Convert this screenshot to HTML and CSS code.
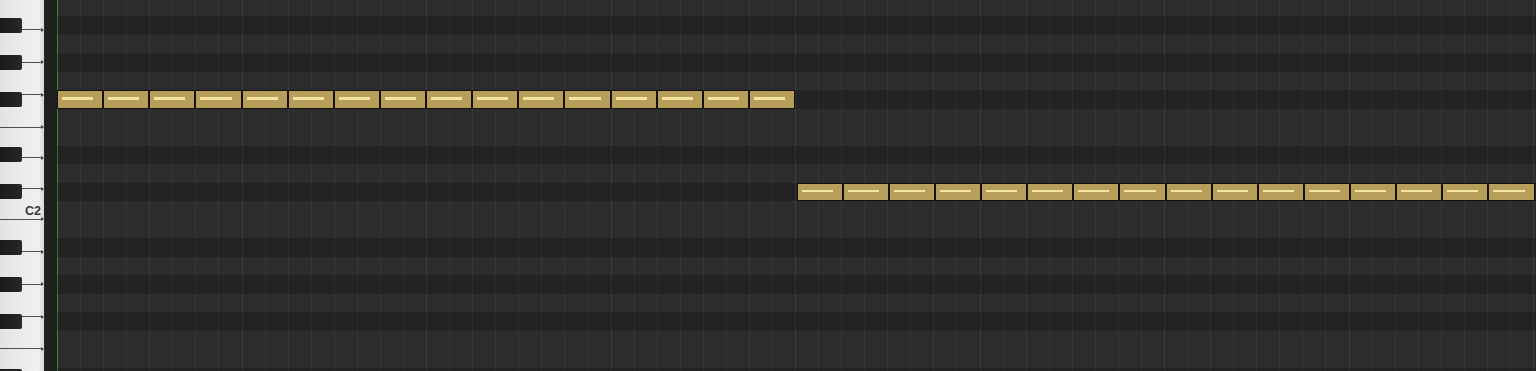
FILE: index.html
```html
<!DOCTYPE html>
<html>
<head>
<meta charset="utf-8">
<link rel="stylesheet" href="styles.css">
</head>
<body>
<div class="roll">
  <div class="keyboard">
    <div class="whites">
      <div class="wk wide"></div>
      <div class="wk wide"></div>
      <div class="wk wide"></div>
      <div class="wk wide"></div>
      <div class="wk narrow"></div>
      <div class="wk narrow"></div>
      <div class="wk narrow"><span class="label">C2</span></div>
      <div class="wk wide"></div>
      <div class="wk wide"></div>
      <div class="wk wide"></div>
      <div class="wk wide"></div>
      <div class="wk narrow"></div>
    </div>
    <div class="bk" style="top:17.5px"></div>
    <div class="bk" style="top:54.5px"></div>
    <div class="bk" style="top:91.5px"></div>
    <div class="bk" style="top:147px"></div>
    <div class="bk" style="top:184px"></div>
    <div class="bk" style="top:239.5px"></div>
    <div class="bk" style="top:276.5px"></div>
    <div class="bk" style="top:313.5px"></div>
    <div class="bk" style="top:369px"></div>
  </div>
  <div class="gutter"></div>
  <div class="grid">
    <div class="cols" id="cols"></div>
    <div class="rows">
      <div class="row"></div>
      <div class="row dark"></div>
      <div class="row"></div>
      <div class="row dark"></div>
      <div class="row"></div>
      <div class="row dark">
        <div class="notes">
          <div class="note"><span></span></div><div class="note"><span></span></div><div class="note"><span></span></div><div class="note"><span></span></div>
          <div class="note"><span></span></div><div class="note"><span></span></div><div class="note"><span></span></div><div class="note"><span></span></div>
          <div class="note"><span></span></div><div class="note"><span></span></div><div class="note"><span></span></div><div class="note"><span></span></div>
          <div class="note"><span></span></div><div class="note"><span></span></div><div class="note"><span></span></div><div class="note"><span></span></div>
        </div>
      </div>
      <div class="row"></div>
      <div class="row"></div>
      <div class="row dark"></div>
      <div class="row"></div>
      <div class="row dark">
        <div class="notes second">
          <div class="note"><span></span></div><div class="note"><span></span></div><div class="note"><span></span></div><div class="note"><span></span></div>
          <div class="note"><span></span></div><div class="note"><span></span></div><div class="note"><span></span></div><div class="note"><span></span></div>
          <div class="note"><span></span></div><div class="note"><span></span></div><div class="note"><span></span></div><div class="note"><span></span></div>
          <div class="note"><span></span></div><div class="note"><span></span></div><div class="note"><span></span></div><div class="note"><span></span></div>
        </div>
      </div>
      <div class="row"></div>
      <div class="row"></div>
      <div class="row dark"></div>
      <div class="row"></div>
      <div class="row dark"></div>
      <div class="row"></div>
      <div class="row dark"></div>
      <div class="row"></div>
      <div class="row"></div>
      <div class="row dark"></div>
    </div>
  </div>
</div>
<script src="script.js"></script>
</body>
</html>
```

FILE: styles.css
```css
* { box-sizing: border-box; }
html, body {
  margin: 0;
  padding: 0;
  width: 1536px;
  height: 371px;
  overflow: hidden;
  background: #1e1e1e;
  font-family: "Liberation Sans", Arial, sans-serif;
}
.roll {
  display: flex;
  height: 371px;
  overflow: hidden;
}
.keyboard {
  position: relative;
  width: 45px;
  flex: none;
  border-right: 1px solid #262626;
  background: linear-gradient(to right, #e3e3e3 0%, #ebebeb 50%, #f0f0f0 88%, #d4d4d4 100%);
  overflow: hidden;
}
.whites {
  display: flex;
  flex-direction: column;
  margin-top: -2.5px;
}
.wk {
  position: relative;
  flex: none;
  display: flex;
  align-items: flex-end;
  justify-content: flex-end;
}
.wk.wide { height: 32.375px; }
.wk.narrow { height: 30.833px; }
.wk::after {
  content: "";
  position: absolute;
  left: 0;
  right: 1px;
  bottom: -0.5px;
  height: 1px;
  background: #4e4e4e;
}
.wk::before {
  content: "";
  position: absolute;
  right: 0;
  bottom: -2px;
  width: 0;
  height: 0;
  border-top: 2px solid transparent;
  border-bottom: 2px solid transparent;
  border-left: 3px solid #3a3a3a;
}
.label {
  font-size: 12.5px;
  font-weight: bold;
  color: #383838;
  line-height: 1;
  padding: 0 3px 2px 0;
}
.bk {
  position: absolute;
  left: 0;
  width: 21.5px;
  height: 15px;
  background: linear-gradient(to right, #1b1b1b, #232323 70%, #2a2a2a);
  border-radius: 0 2px 2px 0;
}
.gutter {
  width: 12px;
  flex: none;
  background: #1e1f1e;
}
.grid {
  flex: 1;
  position: relative;
  overflow: hidden;
  background-color: #2c2c2c;
  box-shadow: inset 1px 0 0 #3d8a3a;
}
.cols {
  display: flex;
  height: 100%;
}
.col {
  flex: none;
  width: 23.0625px;
  height: 100%;
  border-left: 1px solid rgba(255, 255, 255, 0.045);
}
.col.s { border-left-color: rgba(255, 255, 255, 0.06); }
.col.b { border-left-color: rgba(255, 255, 255, 0.08); }
.col:first-child { border-left-color: transparent; }
.rows {
  position: absolute;
  left: 0;
  right: 0;
  top: -2.5px;
  display: flex;
  flex-direction: column;
}
.row {
  height: 18.5px;
  flex: none;
  display: flex;
}
.row.dark {
  background: rgba(0, 0, 0, 0.2);
}
.notes {
  display: flex;
  height: 100%;
}
.notes.second {
  margin-left: 739.5px;
}
.note {
  width: 46.125px;
  height: 100%;
  flex: none;
  background: #b79e5a;
  border: 1px solid #14110a;
  display: flex;
  align-items: flex-start;
  padding: 6px 9px 0 4px;
}
.note span {
  flex: 1;
  height: 2.5px;
  background: #f4e4a6;
}
```

FILE: script.js
```js
(function () {
  var cols = document.getElementById('cols');
  for (var i = 0; i < 66; i++) {
    var d = document.createElement('div');
    d.className = 'col' + (i % 8 === 0 ? ' b' : (i % 2 === 0 ? ' s' : ''));
    cols.appendChild(d);
  }
})();
```
